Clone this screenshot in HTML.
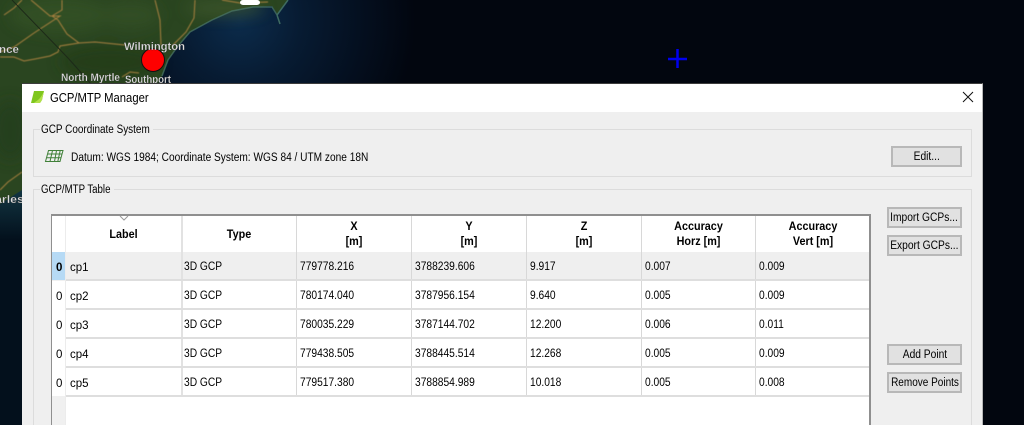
<!DOCTYPE html>
<html><head><meta charset="utf-8"><style>
html,body{margin:0;padding:0;width:1024px;height:425px;overflow:hidden;background:#02060f}
*{box-sizing:border-box}
#r{position:relative;width:1024px;height:425px;overflow:hidden;font:11px "Liberation Sans",sans-serif;color:#000}
.a{position:absolute;white-space:nowrap}
.t{position:absolute;white-space:nowrap;line-height:14px;height:14px;font-size:11.5px;transform:scaleX(.89);transform-origin:0 50%}
.t.u{transform:none}
.h{position:absolute;text-align:center;font-weight:bold;font-size:11.5px;line-height:15px;color:#000;transform:scaleX(.94)}
.b{position:absolute;background:#e1e1e1;border:2px solid #b8b8b8;font-size:11.5px;line-height:18px;color:#000;white-space:nowrap;display:flex;justify-content:center}
.b span{display:block;transform:scaleX(.89)}
.g{position:absolute;left:33px;width:939px;border:1px solid #dcdcdc}
.gt{position:absolute;left:40px;background:#efefef;padding:0 1px;height:14px;font-size:11.5px;line-height:14px;white-space:nowrap}
.gt span{display:block;transform-origin:0 50%}
.v{position:absolute;top:216px;width:1px;height:180px;background:#d8d8d8}
.ln{position:absolute;left:66px;width:803px;height:2px;background:#dedede}
</style></head><body><div id="r">
<svg class="a" style="left:0;top:0" width="1024" height="425" viewBox="0 0 1024 425">
<defs>
<radialGradient id="w" gradientUnits="userSpaceOnUse" cx="240" cy="20" r="175"><stop offset="0" stop-color="#0c2c4c"/><stop offset=".35" stop-color="#071b32"/><stop offset=".7" stop-color="#040f1f"/><stop offset="1" stop-color="#02060f"/></radialGradient>
<linearGradient id="s" x1="0" y1="190" x2="0" y2="240" gradientUnits="userSpaceOnUse"><stop offset="0" stop-color="#123542"/><stop offset="1" stop-color="#03101c"/></linearGradient>
<filter id="bl"><feGaussianBlur stdDeviation="7"/></filter>
<filter id="bl2"><feGaussianBlur stdDeviation="0.4"/></filter>
</defs>
<rect width="1024" height="425" fill="#02060f"/>
<rect width="520" height="90" fill="url(#w)"/>
<rect x="0" y="190" width="22" height="235" fill="url(#s)"/>
<path d="M0 0H272L288 0L277 14L272 6L253 7L232 11L212 20L190 32L178 46L168 60L162 76L158 84H0Z" fill="#2a4520"/>
<path d="M0 84H22V190L0 204Z" fill="#2a4520"/>
<g filter="url(#bl)" opacity=".7">
<ellipse cx="60" cy="15" rx="50" ry="18" fill="#355228"/><ellipse cx="225" cy="8" rx="40" ry="8" fill="#41582f"/>
<ellipse cx="110" cy="62" rx="50" ry="16" fill="#223b16"/><ellipse cx="10" cy="130" rx="18" ry="30" fill="#243d1a"/><ellipse cx="130" cy="15" rx="30" ry="14" fill="#365127"/>
</g>
<path d="M277 15L272 7L253 7L232 11L212 20L190 32L178 46L168 60L162 76" fill="none" stroke="#4a7465" stroke-width="1.500" opacity=".75"/>
<path d="M277 15L280 24M277 15L288 0" fill="none" stroke="#3e6b62" stroke-width="1.500"/>
<g fill="none" stroke="#a8803f" stroke-width="1" filter="url(#bl2)">
<path d="M31 0L50 16L60 16L34 33L14 47L0 52"/><path d="M62 0V10L52 16L58 20L67 34L79 43L95 42L125 45"/><path d="M79 43L60 46L58 52L50 56L35 59L24 61L14 57H0"/><path d="M155 0L160 20L161 45"/><path d="M195 0L194 18L186 32L172 46"/><path d="M139 73L130 72L122 77"/><path d="M0 190L8 182L22 172"/><path d="M4 15L14 8L22 0"/><path d="M222 0L240 3L268 2"/>
</g>
<path d="M12 0L68 58L92 85" fill="none" stroke="#1d2a18" stroke-width="1"/>
<rect x="240" y="0" width="20" height="5" rx="3" fill="#fff"/>
<circle cx="153" cy="60" r="11.500" fill="#fe0000" stroke="#111" stroke-width="1"/>
<path d="M668 59H687M677.500 49V68" stroke="#0000ee" stroke-width="2.500" fill="none"/>
<g font-family="Liberation Sans,sans-serif" font-weight="bold" font-size="11" fill="#dedede" stroke="#222" stroke-width=".2">
<text x="124" y="50" textLength="61" lengthAdjust="spacingAndGlyphs">Wilmington</text>
<text x="-1" y="53" textLength="20" lengthAdjust="spacingAndGlyphs">nce</text>
<text x="61" y="81" textLength="59" lengthAdjust="spacingAndGlyphs">North Myrtle</text>
<text x="125" y="83" textLength="46" lengthAdjust="spacingAndGlyphs">Southport</text>
<text x="-5" y="203" textLength="29" lengthAdjust="spacingAndGlyphs">arles</text>
</g>
</svg>

<!-- dialog -->
<div class="a" style="left:22px;top:83px;width:961px;height:342px;background:#efefef;border-top:1px solid #3c3c3c;border-right:1px solid #b8b8b8"></div>
<div class="a" style="left:22px;top:84px;width:960px;height:28px;background:#fff"></div>
<svg class="a" style="left:31px;top:90px" width="14" height="14" viewBox="0 0 14 14"><path d="M3 1H13L11 10L9 13H0Z" fill="#7fc61e"/><path d="M4 12C8 10 11 6 13 1L11 10L9 13H3Z" fill="#b2e04a"/></svg>
<div class="a" style="left:50px;top:90px;font-size:12.500px;line-height:16px;color:#000;transform:scaleX(.9);transform-origin:0 50%">GCP/MTP Manager</div>
<svg class="a" style="left:962px;top:91px" width="12" height="12" viewBox="0 0 12 12"><path d="M1 1L11 11M11 1L1 11" stroke="#111" stroke-width="1" fill="none"/></svg>

<div class="g" style="top:129px;height:48px"></div>
<div class="gt" style="top:123px;width:113px"><span style="transform:scaleX(.865)">GCP Coordinate System</span></div>
<svg class="a" style="left:44px;top:149px" width="20" height="14" viewBox="0 0 20 14"><path d="M4.500 1.500H19L16 12.500H1.500ZM3.500 5H18M2.500 8.800H17M8.500 1.500L6 12.500M12.500 1.500L10.500 12.500M16.200 1.500L13.800 12.500" stroke="#3f8038" stroke-width="1" fill="none"/></svg>
<div class="t" style="left:71px;top:151px;transform:scaleX(.881)">Datum: WGS 1984; Coordinate System: WGS 84 / UTM zone 18N</div>
<div class="b" style="left:891px;top:146px;width:71px;height:21px"><span>Edit...</span></div>

<div class="g" style="top:189px;height:240px"></div>
<div class="gt" style="top:183px;width:74px"><span style="transform:scaleX(.84)">GCP/MTP Table</span></div>

<!-- table -->
<div class="a" style="left:51px;top:214px;width:820px;height:220px;background:#fff;border:1px solid #8f8f8f;border-width:2px 2px 0 1px"></div>
<div class="a" style="left:52px;top:216px;width:14px;height:209px;background:#f0f0f0"></div>
<div class="a" style="left:52px;top:216px;width:14px;height:36px;background:#fff"></div>
<div class="a" style="left:66px;top:252px;width:803px;height:28px;background:#efefef"></div>
<div class="a" style="left:52px;top:252px;width:14px;height:28px;background:#b6daf5"></div>
<div class="a" style="left:52px;top:281px;width:14px;height:115px;background:#fff"></div>
<div class="v" style="left:65px;width:1px;height:209px;background:#ececec"></div>
<div class="v" style="left:181px;width:2px;background:#e2e2e2"></div>
<div class="v" style="left:296px"></div>
<div class="v" style="left:411px"></div>
<div class="v" style="left:526px"></div>
<div class="v" style="left:641px"></div>
<div class="v" style="left:755px"></div>
<div class="ln" style="top:279px"></div><div class="ln" style="top:308px"></div><div class="ln" style="top:337px"></div><div class="ln" style="top:366px"></div><div class="ln" style="top:395px"></div>
<svg class="a" style="left:119px;top:215px" width="10" height="6" viewBox="0 0 10 6"><path d="M1 1L5 5L9 1" stroke="#999" fill="none"/></svg>

<div class="h" style="left:66px;width:115px;top:228px">Label</div>
<div class="h" style="left:182px;width:114px;top:228px">Type</div>
<div class="h" style="left:297px;width:114px;top:220px">X<br>[m]</div>
<div class="h" style="left:412px;width:114px;top:220px">Y<br>[m]</div>
<div class="h" style="left:527px;width:114px;top:220px">Z<br>[m]</div>
<div class="h" style="left:642px;width:113px;top:220px">Accuracy<br>Horz [m]</div>
<div class="h" style="left:756px;width:114px;top:220px">Accuracy<br>Vert [m]</div>

<div class="t u" style="left:56px;top:261px;font-weight:bold">0</div><div class="t u" style="left:70px;top:261px">cp1</div><div class="t" style="left:184px;top:260px">3D GCP</div><div class="t" style="left:300px;top:260px">779778.216</div><div class="t" style="left:415px;top:260px">3788239.606</div><div class="t" style="left:530px;top:260px">9.917</div><div class="t" style="left:645px;top:260px">0.007</div><div class="t" style="left:759px;top:260px">0.009</div>
<div class="t u" style="left:56px;top:290px">0</div><div class="t u" style="left:70px;top:290px">cp2</div><div class="t" style="left:184px;top:289px">3D GCP</div><div class="t" style="left:300px;top:289px">780174.040</div><div class="t" style="left:415px;top:289px">3787956.154</div><div class="t" style="left:530px;top:289px">9.640</div><div class="t" style="left:645px;top:289px">0.005</div><div class="t" style="left:759px;top:289px">0.009</div>
<div class="t u" style="left:56px;top:319px">0</div><div class="t u" style="left:70px;top:319px">cp3</div><div class="t" style="left:184px;top:318px">3D GCP</div><div class="t" style="left:300px;top:318px">780035.229</div><div class="t" style="left:415px;top:318px">3787144.702</div><div class="t" style="left:530px;top:318px">12.200</div><div class="t" style="left:645px;top:318px">0.006</div><div class="t" style="left:759px;top:318px">0.011</div>
<div class="t u" style="left:56px;top:348px">0</div><div class="t u" style="left:70px;top:348px">cp4</div><div class="t" style="left:184px;top:347px">3D GCP</div><div class="t" style="left:300px;top:347px">779438.505</div><div class="t" style="left:415px;top:347px">3788445.514</div><div class="t" style="left:530px;top:347px">12.268</div><div class="t" style="left:645px;top:347px">0.005</div><div class="t" style="left:759px;top:347px">0.009</div>
<div class="t u" style="left:56px;top:377px">0</div><div class="t u" style="left:70px;top:377px">cp5</div><div class="t" style="left:184px;top:376px">3D GCP</div><div class="t" style="left:300px;top:376px">779517.380</div><div class="t" style="left:415px;top:376px">3788854.989</div><div class="t" style="left:530px;top:376px">10.018</div><div class="t" style="left:645px;top:376px">0.005</div><div class="t" style="left:759px;top:376px">0.008</div>

<div class="b" style="left:887px;top:207px;width:75px;height:21px"><span>Import GCPs...</span></div>
<div class="b" style="left:887px;top:235px;width:75px;height:21px"><span>Export GCPs...</span></div>
<div class="b" style="left:887px;top:344px;width:75px;height:21px"><span>Add Point</span></div>
<div class="b" style="left:887px;top:372px;width:75px;height:21px"><span style="transform:scaleX(.87)">Remove Points</span></div>
</div></body></html>
